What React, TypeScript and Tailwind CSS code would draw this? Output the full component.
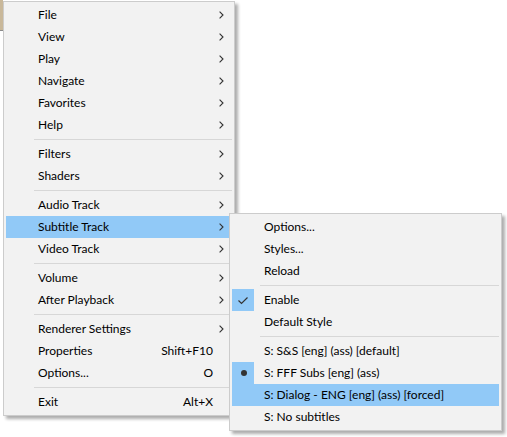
import React from "react";

type Item =
  | { sep: true }
  | {
      sep?: false;
      label: string;
      shortcut?: string;
      sub?: boolean;
      hl?: boolean;
      check?: boolean;
      radio?: boolean;
    };

const Chevron = () => (
  <svg width="5" height="8" viewBox="0 0 5 8" className="block">
    <polyline points="0.6,0.6 4,4 0.6,7.4" fill="none" stroke="#333" strokeWidth="1.1" />
  </svg>
);

const Check = () => (
  <svg width="22" height="22" viewBox="0 0 22 22" className="block">
    <polyline points="6.5,11.5 9.5,14.5 15.5,8.5" fill="none" stroke="#333" strokeWidth="1.2" />
  </svg>
);

const Dot = () => (
  <svg width="22" height="22" viewBox="0 0 22 22" className="block">
    <circle cx="12" cy="11" r="3" fill="#333" />
  </svg>
);

function Row({ item }: { item: Item }) {
  if (item.sep) {
    return (
      <div className="flex h-[7px] items-center pl-[28px]">
        <div className="h-px w-full bg-[#d7d7d7]" />
      </div>
    );
  }
  return (
    <div className={`flex h-[22px] items-center ${item.hl ? "bg-[#91c9f7]" : ""}`}>
      <div className="flex h-[22px] w-[32px] shrink-0">
        {(item.check || item.radio) && (
          <div className="h-[22px] w-[22px] bg-[#91c9f7]">{item.check ? <Check /> : <Dot />}</div>
        )}
      </div>
      <div className="flex-1 whitespace-nowrap text-black">{item.label}</div>
      {item.shortcut && <div className="whitespace-nowrap text-black">{item.shortcut}</div>}
      <div className="flex w-[19px] shrink-0 items-center pl-[6px]">{item.sub && <Chevron />}</div>
    </div>
  );
}

const S: Item = { sep: true };

const mainItems: Item[] = [
  { label: "File", sub: true },
  { label: "View", sub: true },
  { label: "Play", sub: true },
  { label: "Navigate", sub: true },
  { label: "Favorites", sub: true },
  { label: "Help", sub: true },
  S,
  { label: "Filters", sub: true },
  { label: "Shaders", sub: true },
  S,
  { label: "Audio Track", sub: true },
  { label: "Subtitle Track", sub: true, hl: true },
  { label: "Video Track", sub: true },
  S,
  { label: "Volume", sub: true },
  { label: "After Playback", sub: true },
  S,
  { label: "Renderer Settings", sub: true },
  { label: "Properties", shortcut: "Shift+F10" },
  { label: "Options...", shortcut: "O" },
  S,
  { label: "Exit", shortcut: "Alt+X" },
];

const subItems: Item[] = [
  { label: "Options..." },
  { label: "Styles..." },
  { label: "Reload" },
  S,
  { label: "Enable", check: true },
  { label: "Default Style" },
  S,
  { label: "S: S&S [eng] (ass) [default]" },
  { label: "S: FFF Subs [eng] (ass)", radio: true },
  { label: "S: Dialog - ENG [eng] (ass) [forced]", hl: true },
  { label: "S: No subtitles" },
];

export default function App() {
  return (
    <div
      className="relative h-[437px] w-[507px] overflow-hidden bg-white text-[12px] leading-none"
      style={{ fontFamily: "'Segoe UI', Lato, 'Noto Sans', sans-serif" }}
    >
      <div className="absolute left-0 top-0 h-[30px] w-[3px] bg-[#c9b89a]" />
      <div className="absolute left-0 top-[30px] h-px w-[3px] bg-[#8a8a8a]" />
      <div className="absolute left-[3px] top-[1px] w-[232px] border border-[#cccccc] bg-[#f2f2f2] p-[2px] shadow-[3px_3px_3px_rgba(0,0,0,0.32)]">
        {mainItems.map((it, i) => (
          <Row key={i} item={it} />
        ))}
      </div>
      <div className="absolute left-[229px] top-[213px] w-[273px] border border-[#cccccc] bg-[#f2f2f2] p-[2px] shadow-[3px_3px_3px_rgba(0,0,0,0.32)]">
        {subItems.map((it, i) => (
          <Row key={i} item={it} />
        ))}
      </div>
    </div>
  );
}
